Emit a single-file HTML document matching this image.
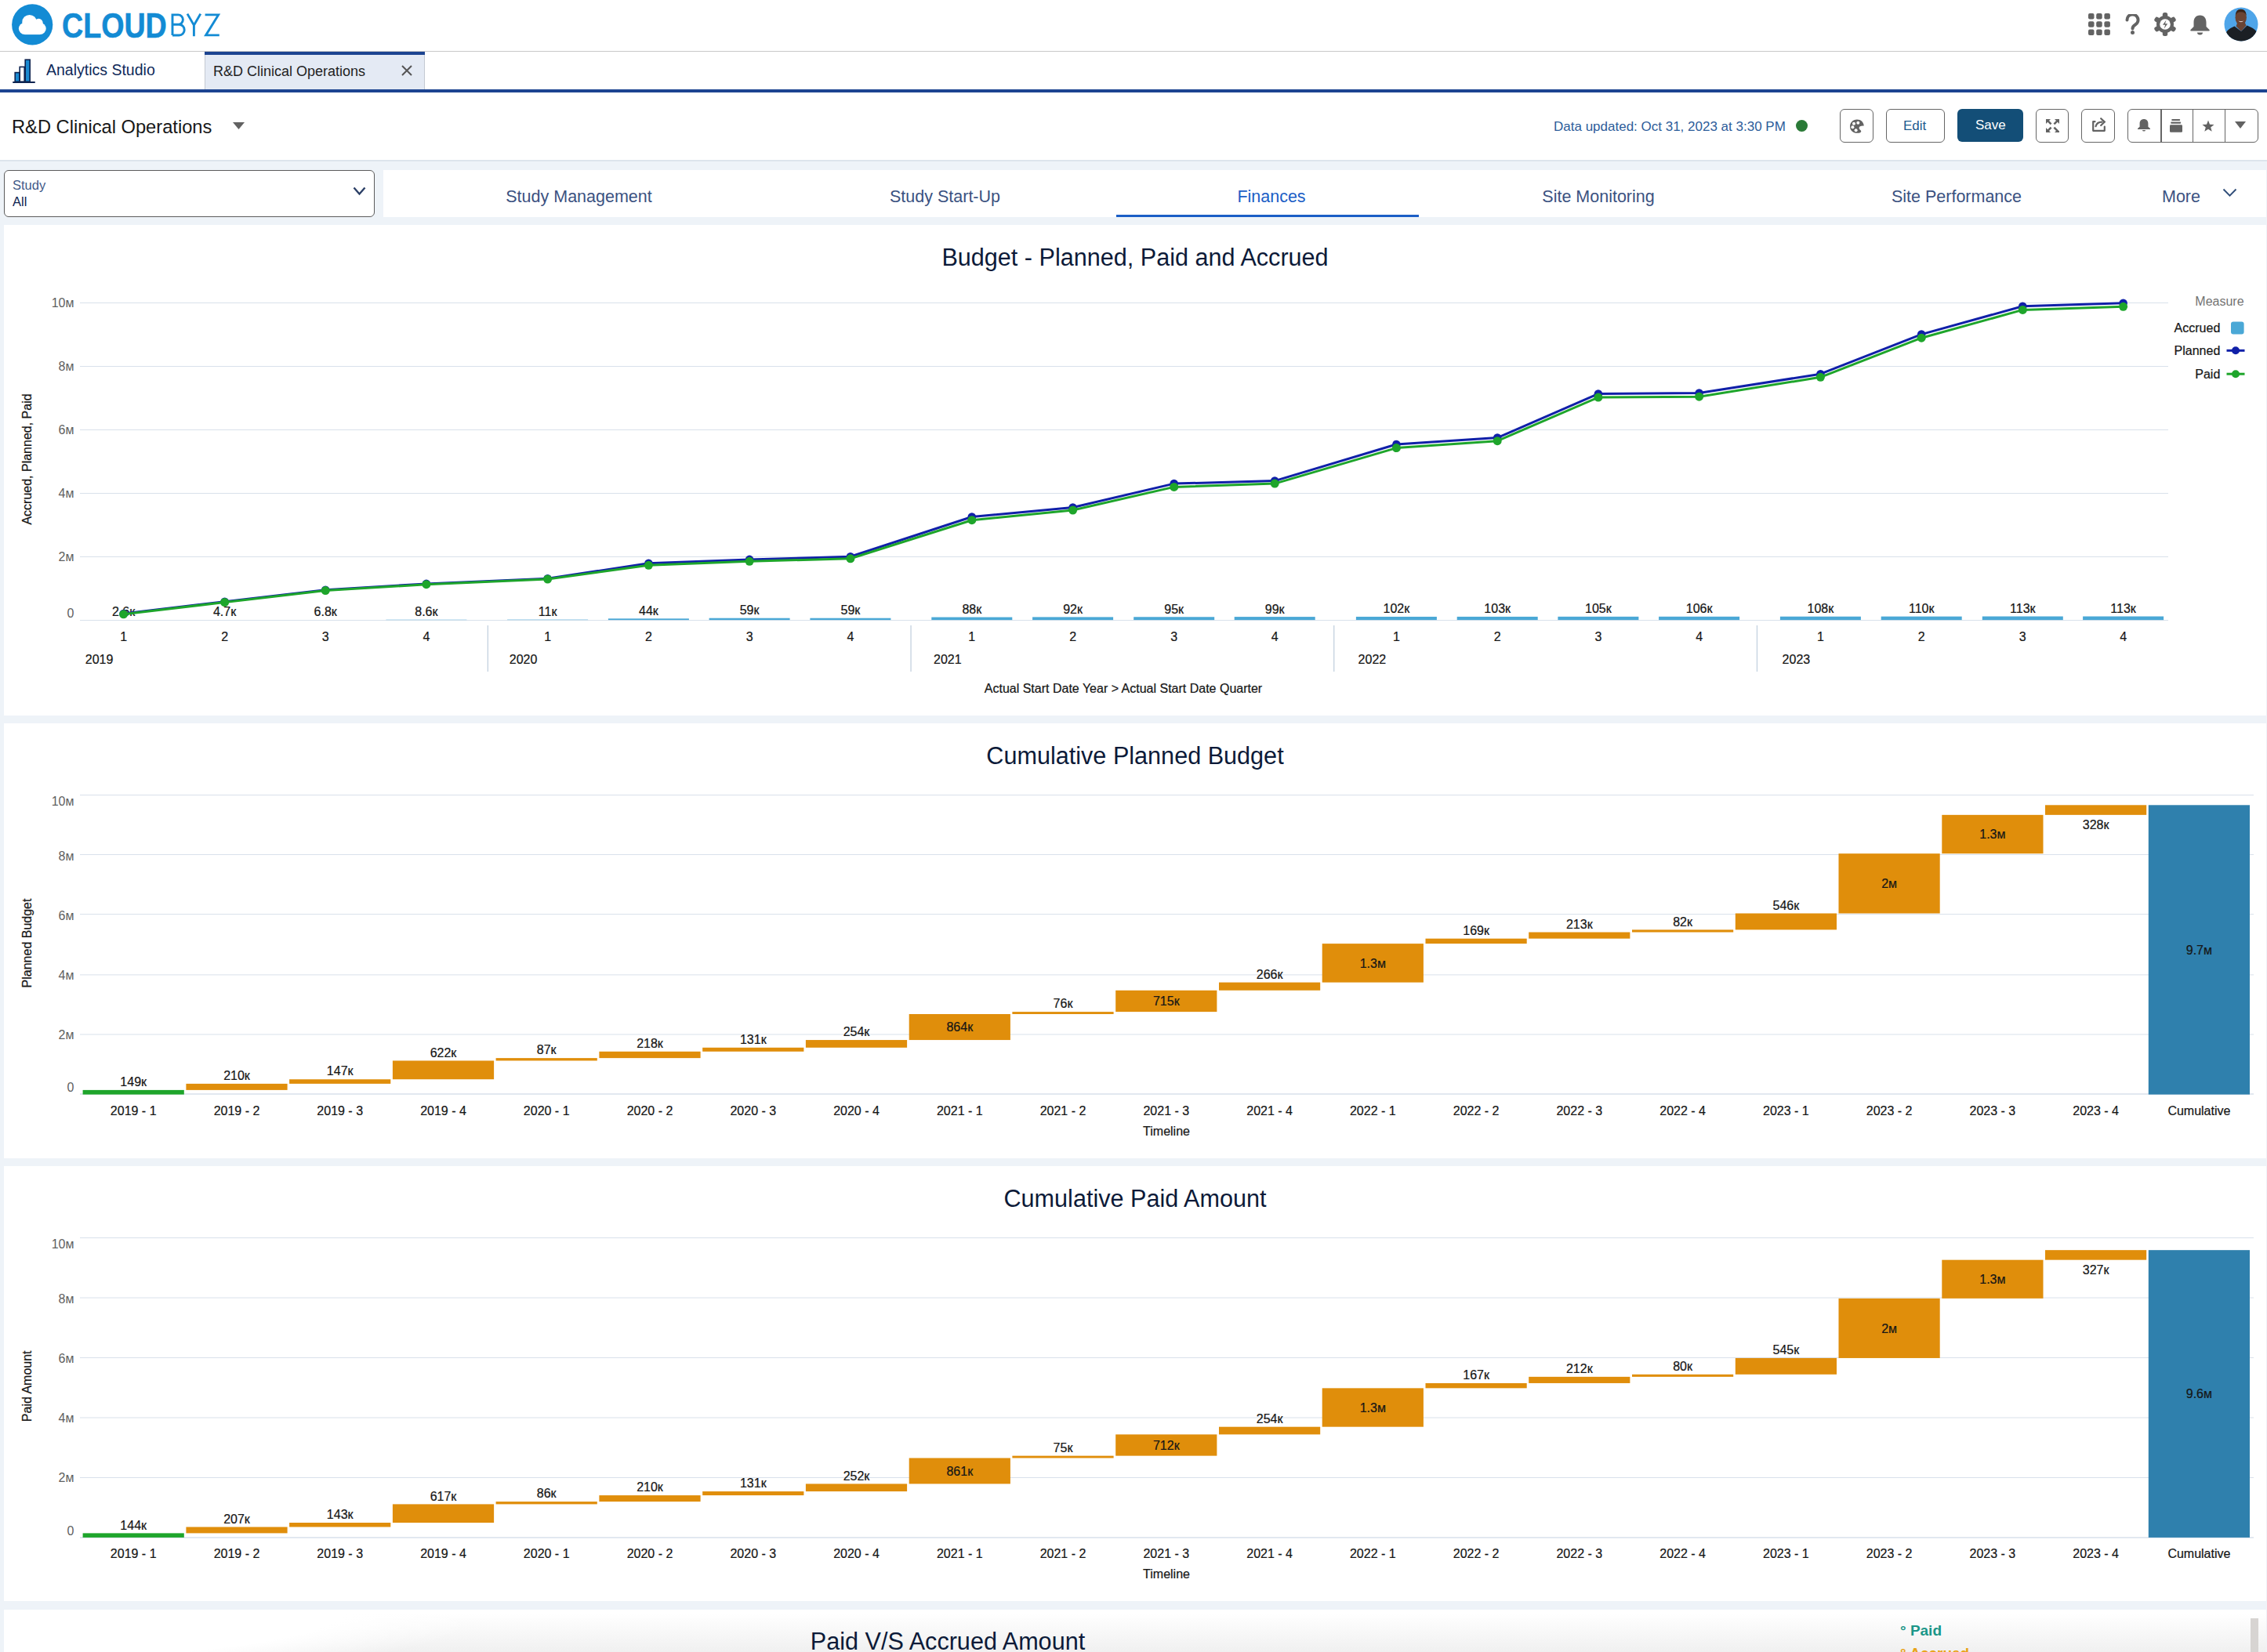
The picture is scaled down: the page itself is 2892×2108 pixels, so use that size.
<!DOCTYPE html><html><head><meta charset="utf-8"><title>R&amp;D Clinical Operations</title><style>
*{margin:0;padding:0;box-sizing:border-box}
html,body{width:2892px;height:2108px;overflow:hidden;background:#eef3f8;font-family:"Liberation Sans",sans-serif}
.a{position:absolute}
.t{position:absolute;white-space:nowrap;line-height:1}
</style></head><body>
<div class="a" style="left:0;top:0;width:2892px;height:65px;background:#fff"></div>
<div class="a" style="left:0;top:65px;width:2892px;height:1px;background:#c9c9c9"></div>
<svg class="a" style="left:15px;top:5px" width="53" height="53" viewBox="0 0 53 53">
<circle cx="26.2" cy="26.4" r="26.1" fill="#138bd4"/>
<g fill="#fff"><circle cx="22.6" cy="23.2" r="9.3"/><circle cx="34.3" cy="24.2" r="5.4"/><circle cx="16.5" cy="31.5" r="7.6"/><circle cx="36.1" cy="31.5" r="7.6"/><rect x="16.5" y="24" width="19.6" height="15.1"/></g>
</svg>
<div class="t" style="left:79px;top:11px;font-size:44px;font-weight:bold;color:#138bd4;-webkit-text-stroke:0.6px #138bd4;transform:scaleX(0.855);transform-origin:left">CLOUD</div>
<svg class="a" style="left:0;top:0" width="300" height="60" viewBox="0 0 300 60"><g fill="none" stroke="#138bd4" stroke-width="2.9" stroke-linejoin="miter">
<path d="M220 45 V18.9 H227.3 A6.1 6.2 0 0 1 227.3 31.3 H220 M227.3 31.3 H228.6 A6.6 6.85 0 0 1 228.6 45 H220"/>
<path d="M239 17.6 L247.4 32.2 L255.8 17.6 M247.4 32.2 V46.3"/>
<path d="M261.6 18.9 H278.6 L262.6 44.9 H279.8"/>
</g></svg>
<svg class="a" style="left:2664px;top:17px" width="28" height="28" viewBox="0 0 28 28" fill="#636363">
<rect x="0" y="0" width="7.5" height="7.5" rx="2"/><rect x="10.2" y="0" width="7.5" height="7.5" rx="2"/><rect x="20.4" y="0" width="7.5" height="7.5" rx="2"/>
<rect x="0" y="10.2" width="7.5" height="7.5" rx="2"/><rect x="10.2" y="10.2" width="7.5" height="7.5" rx="2"/><rect x="20.4" y="10.2" width="7.5" height="7.5" rx="2"/>
<rect x="0" y="20.4" width="7.5" height="7.5" rx="2"/><rect x="10.2" y="20.4" width="7.5" height="7.5" rx="2"/><rect x="20.4" y="20.4" width="7.5" height="7.5" rx="2"/>
</svg>
<svg class="a" style="left:2711px;top:18px" width="19" height="27" viewBox="0 0 19 27">
<path d="M2.5 7.5 a7 7 0 1 1 10.5 6 q-3.5 2 -3.5 5" fill="none" stroke="#636363" stroke-width="4" stroke-linecap="round"/>
<circle cx="9.5" cy="23.5" r="2.5" fill="#636363"/>
</svg>
<svg class="a" style="left:2747px;top:15px" width="30" height="32" viewBox="0 0 30 32">
<g fill="#636363"><circle cx="15" cy="16" r="11"/>
<g transform="translate(15 16)">
<rect x="-3.2" y="-15" width="6.4" height="7" rx="2.5"/>
<rect x="-3.2" y="-15" width="6.4" height="7" rx="2.5" transform="rotate(60)"/>
<rect x="-3.2" y="-15" width="6.4" height="7" rx="2.5" transform="rotate(120)"/>
<rect x="-3.2" y="-15" width="6.4" height="7" rx="2.5" transform="rotate(180)"/>
<rect x="-3.2" y="-15" width="6.4" height="7" rx="2.5" transform="rotate(240)"/>
<rect x="-3.2" y="-15" width="6.4" height="7" rx="2.5" transform="rotate(300)"/>
</g></g>
<circle cx="15" cy="16" r="6.8" fill="#fff"/>
<path d="M16.5 10.5 l-4.5 6.2 h3.2 l-1.6 5 l4.6 -6.4 h-3.2 z" fill="#636363"/>
</svg>
<svg class="a" style="left:2793px;top:18px" width="27" height="27" viewBox="0 0 27 27">
<path d="M13.5 1.5 c-5.5 0 -8 4.2 -8 9 v5.5 l-4 4 q-0.8 1.2 0.6 1.6 h22.8 q1.4 -0.4 0.6 -1.6 l-4 -4 v-5.5 c0 -4.8 -2.5 -9 -8 -9 z" fill="#636363"/>
<path d="M10 23.5 h7 a3.5 3 0 0 1 -7 0 z" fill="#636363"/>
</svg>
<svg class="a" style="left:2837px;top:9px" width="44" height="44" viewBox="0 0 44 44">
<defs><clipPath id="avc"><circle cx="22" cy="22" r="21.5"/></clipPath></defs>
<g clip-path="url(#avc)">
<rect width="44" height="44" fill="#4fa5e9"/>
<path d="M15.5 24.5 L22 31 L28.5 23.5 L26 18 L18 18 Z" fill="#6a4434"/>
<path d="M-2 46 L2 34 Q4 28.5 13.5 24.5 L22 31 L29.5 23.5 Q38 26.5 42 31.5 L46 46 Z" fill="#1b1f24"/>
<ellipse cx="21.7" cy="13.2" rx="7.2" ry="10.4" fill="#6a4434"/>
<path d="M14.6 11 Q15 2.8 21.7 2.8 Q28.4 2.8 28.8 11 Q27.5 6.2 21.7 6.2 Q16 6.2 14.6 11 Z" fill="#3a2419"/>
<path d="M18.3 17.5 Q21.8 21 25.3 17.5 Q21.8 18.8 18.3 17.5 Z" fill="#f2e6e3"/>
</g></svg>
<div class="a" style="left:0;top:66px;width:2892px;height:48px;background:#fff"></div>
<div class="a" style="left:0;top:114px;width:2892px;height:4px;background:#1c4491"></div>
<svg class="a" style="left:15px;top:75px" width="31" height="31" viewBox="0 0 31 31">
<rect x="1" y="29" width="29" height="2" rx="1" fill="#0d2350"/>
<rect x="4.2" y="17.6" width="6" height="11.6" fill="#1a8ad0" stroke="#0d2350" stroke-width="1.6"/>
<rect x="10.2" y="10.4" width="6" height="18.8" fill="#fff" stroke="#0d2350" stroke-width="1.6"/>
<rect x="17.2" y="1.2" width="6" height="28" fill="#1a8ad0" stroke="#0d2350" stroke-width="1.6"/>
</svg>
<div class="t" style="left:59px;top:80px;font-size:19.5px;color:#0f2a5a">Analytics Studio</div>
<div class="a" style="left:261px;top:66px;width:281px;height:48px;background:#e4eaf4;border-left:1px solid #c4c9d2;border-right:1px solid #c4c9d2"></div>
<div class="a" style="left:261px;top:66px;width:281px;height:4px;background:#1c4491"></div>
<div class="t" style="left:272px;top:82px;font-size:18px;color:#1f1f1f">R&amp;D Clinical Operations</div>
<svg class="a" style="left:512px;top:83px" width="14" height="14" viewBox="0 0 14 14"><path d="M1 1 L13 13 M13 1 L1 13" stroke="#555" stroke-width="2"/></svg>
<div class="a" style="left:0;top:118px;width:2892px;height:86px;background:#fff"></div>
<div class="a" style="left:0;top:204px;width:2892px;height:2px;background:#dde4ec"></div>
<div class="t" style="left:15px;top:151px;font-size:23.7px;color:#181818">R&amp;D Clinical Operations</div>
<svg class="a" style="left:297px;top:156px" width="15" height="9" viewBox="0 0 15 9"><path d="M0 0 H15 L7.5 9 Z" fill="#626262"/></svg>
<div class="t" style="left:1982px;top:153px;font-size:17px;color:#2d5d9a">Data updated: Oct 31, 2023 at 3:30 PM</div>
<div class="a" style="left:2291px;top:153px;width:15px;height:15px;border-radius:50%;background:#2a7a37"></div>
<div class="a" style="left:2347px;top:139px;width:43px;height:43px;border:1.3px solid #666;border-radius:6px;background:#fff;"><svg class="a" style="left:11px;top:11px" width="20" height="20" viewBox="0 0 20 20"><path d="M10 1.5 C4.5 1.5 1 5.5 1 10.5 C1 15.5 5 18.8 10 18.8 C13.5 18.8 15.6 17.8 15.2 16.2 C14.8 14.6 12.6 14.4 12.6 12.2 C12.6 10.4 14.5 9.6 17.5 9.6 L18.8 9.6 C18.5 5 15 1.5 10 1.5 Z" fill="#626262"/><circle cx="6" cy="6.8" r="2" fill="#fff"/><circle cx="11.3" cy="5.8" r="2" fill="#fff"/><circle cx="4.4" cy="11.2" r="2" fill="#fff"/><circle cx="8.6" cy="15.2" r="2" fill="#fff"/></svg></div>
<div class="a" style="left:2406px;top:139px;width:75px;height:43px;border:1.3px solid #666;border-radius:6px;background:#fff;"><div class="t" style="left:21px;top:12px;font-size:17px;color:#1d5a8e">Edit</div></div>
<div class="a" style="left:2497px;top:139px;width:84px;height:42px;border-radius:6px;background:#134e77"></div>
<div class="t" style="left:2520px;top:151px;font-size:17px;color:#fff">Save</div>
<div class="a" style="left:2597px;top:139px;width:42px;height:43px;border:1.3px solid #666;border-radius:6px;background:#fff;"><svg class="a" style="left:11px;top:11px" width="19" height="19" viewBox="0 0 19 19" fill="#626262"><path d="M1 1 h6 l-2 2 l3.5 3.5 l-1.8 1.8 l-3.5 -3.5 l-2.2 2.2 z"/><path d="M18 1 h-6 l2 2 l-3.5 3.5 l1.8 1.8 l3.5 -3.5 l2.2 2.2 z"/><path d="M1 18 h6 l-2 -2 l3.5 -3.5 l-1.8 -1.8 l-3.5 3.5 l-2.2 -2.2 z"/><path d="M18 18 h-6 l2 -2 l-3.5 -3.5 l1.8 -1.8 l3.5 3.5 l2.2 2.2 z"/></svg></div>
<div class="a" style="left:2655px;top:139px;width:43px;height:43px;border:1.3px solid #666;border-radius:6px;background:#fff;"><svg class="a" style="left:12px;top:10px" width="19" height="19" viewBox="0 0 19 19"><path d="M4.5 5.2 H2.2 V16.8 H16.8 V11.5" fill="none" stroke="#626262" stroke-width="2.2" stroke-linejoin="round" stroke-linecap="round"/><path d="M5.5 11.2 C6.5 7.5 9.5 5.6 13.5 5.6" fill="none" stroke="#626262" stroke-width="2.2" stroke-linecap="round"/><path d="M12.2 1.2 L16.8 5.6 L12.2 10" fill="none" stroke="#626262" stroke-width="2.2" stroke-linecap="round"/></svg></div>
<div class="a" style="left:2714px;top:139px;width:167px;height:43px;border:1.3px solid #666;border-radius:6px;background:#fff"></div>
<div class="a" style="left:2756px;top:139px;width:2px;height:43px;background:#666"></div>
<div class="a" style="left:2797px;top:139px;width:1.3px;height:43px;background:#666"></div>
<div class="a" style="left:2838px;top:139px;width:1.3px;height:43px;background:#666"></div>
<svg class="a" style="left:2726px;top:151px" width="18" height="18" viewBox="0 0 18 18" fill="#626262"><path d="M9 1 c-3.2 0 -5.4 2.2 -5.4 5.5 v4.2 l-2.6 2.4 v0.9 h16 v-0.9 l-2.6 -2.4 v-4.2 c0 -3.3 -2.2 -5.5 -5.4 -5.5z"/><path d="M7 15 h4 a2 1.6 0 0 1 -4 0z"/></svg>
<svg class="a" style="left:2767px;top:151px" width="18" height="18" viewBox="0 0 18 18" fill="#626262"><rect x="3.2" y="1" width="11" height="2" rx="1"/><rect x="2.2" y="4.5" width="13" height="2.2" rx="1"/><rect x="1" y="8.2" width="16" height="9.5" rx="1.3"/></svg>
<svg class="a" style="left:2809px;top:153px" width="16" height="16" viewBox="0 0 16 16"><path d="M8 0.5 L10 5.7 L15.5 5.9 L11.2 9.4 L12.7 14.8 L8 11.7 L3.3 14.8 L4.8 9.4 L0.5 5.9 L6 5.7 Z" fill="#626262"/></svg>
<svg class="a" style="left:2851px;top:155px" width="15" height="10" viewBox="0 0 15 10"><path d="M0 0 H14 L7 9 Z" fill="#626262"/></svg>
<div class="a" style="left:5px;top:217px;width:473px;height:60px;background:#fff;border:1.3px solid #5c5c5c;border-radius:6px"></div>
<div class="t" style="left:16px;top:228px;font-size:16.5px;color:#3f5a88">Study</div>
<div class="t" style="left:16px;top:249px;font-size:16.5px;color:#0d2350">All</div>
<svg class="a" style="left:450px;top:238px" width="17" height="12" viewBox="0 0 17 12"><path d="M1.5 1.5 L8.5 9.5 L15.5 1.5" fill="none" stroke="#2b3f66" stroke-width="2.4"/></svg>
<div class="a" style="left:489px;top:217px;width:2402px;height:60px;background:#fff"></div>
<div class="t" style="left:338.5px;width:800px;text-align:center;top:241px;font-size:21.5px;color:#3b5281">Study Management</div>
<div class="t" style="left:805.5px;width:800px;text-align:center;top:241px;font-size:21.5px;color:#3b5281">Study Start-Up</div>
<div class="t" style="left:1222px;width:800px;text-align:center;top:241px;font-size:21.5px;color:#1b5ec6">Finances</div>
<div class="t" style="left:1639px;width:800px;text-align:center;top:241px;font-size:21.5px;color:#3b5281">Site Monitoring</div>
<div class="t" style="left:2096px;width:800px;text-align:center;top:241px;font-size:21.5px;color:#3b5281">Site Performance</div>
<div class="a" style="left:1424px;top:274px;width:386px;height:3px;background:#1b5ec6"></div>
<div class="t" style="left:2758px;top:241px;font-size:21.5px;color:#3b5281">More</div>
<svg class="a" style="left:2835px;top:240px" width="19" height="12" viewBox="0 0 19 12"><path d="M1.5 1.5 L9.5 9.7 L17.5 1.5" fill="none" stroke="#2f4d78" stroke-width="1.9"/></svg>
<div class="a" style="left:5px;top:287px;width:2886px;height:626px;background:#fff"></div>
<div class="a" style="left:5px;top:923px;width:2886px;height:555px;background:#fff"></div>
<div class="a" style="left:5px;top:1488px;width:2886px;height:555px;background:#fff"></div>
<div class="a" style="left:5px;top:2054px;width:2886px;height:54px;background:radial-gradient(ellipse 620px 90px at 0px 0px,#fff 0%,#fff 70%,rgba(255,255,255,0) 100%),linear-gradient(#fff 10%,#f0f0f0)"></div>
<svg class="a" style="left:0;top:0" width="2892" height="2108" viewBox="0 0 2892 2108" font-family="Liberation Sans, sans-serif"><style>text{stroke-width:0.22px}</style>
<text x="1448" y="339" text-anchor="middle" font-size="30.6" fill="#0c1a38">Budget - Planned, Paid and Accrued</text>
<rect x="102" y="386.00" width="2664" height="1" fill="#d9e1eb"/>
<rect x="102" y="467.00" width="2664" height="1" fill="#d9e1eb"/>
<rect x="102" y="548.00" width="2664" height="1" fill="#d9e1eb"/>
<rect x="102" y="629.00" width="2664" height="1" fill="#d9e1eb"/>
<rect x="102" y="710.00" width="2664" height="1" fill="#d9e1eb"/>
<rect x="102" y="791.00" width="2664" height="1" fill="#d9e1eb"/>
<text x="94.5" y="391.8" text-anchor="end" font-size="16" fill="#5f5f5f">10м</text>
<text x="94.5" y="472.8" text-anchor="end" font-size="16" fill="#5f5f5f">8м</text>
<text x="94.5" y="553.8" text-anchor="end" font-size="16" fill="#5f5f5f">6м</text>
<text x="94.5" y="634.8" text-anchor="end" font-size="16" fill="#5f5f5f">4м</text>
<text x="94.5" y="715.8" text-anchor="end" font-size="16" fill="#5f5f5f">2м</text>
<text x="94.5" y="788.0" text-anchor="end" font-size="16" fill="#5f5f5f">0</text>
<text transform="translate(39.5 586) rotate(-90)" text-anchor="middle" font-size="16" fill="#161616" stroke="#161616">Accrued, Planned, Paid</text>
<rect x="492.4" y="790.75" width="103" height="0.35" fill="#4aa8d6"/>
<rect x="647.1" y="790.65" width="103" height="0.45" fill="#4aa8d6"/>
<rect x="775.9" y="789.32" width="103" height="1.78" fill="#4aa8d6"/>
<rect x="904.6" y="788.71" width="103" height="2.39" fill="#4aa8d6"/>
<rect x="1033.4" y="788.71" width="103" height="2.39" fill="#4aa8d6"/>
<rect x="1188.3" y="787.54" width="103" height="3.56" fill="#4aa8d6"/>
<rect x="1317.1" y="787.38" width="103" height="3.72" fill="#4aa8d6"/>
<rect x="1446.2" y="787.26" width="103" height="3.84" fill="#4aa8d6"/>
<rect x="1574.7" y="787.09" width="103" height="4.01" fill="#4aa8d6"/>
<rect x="1729.9" y="786.97" width="103" height="4.13" fill="#4aa8d6"/>
<rect x="1858.7" y="786.93" width="103" height="4.17" fill="#4aa8d6"/>
<rect x="1987.4" y="786.85" width="103" height="4.25" fill="#4aa8d6"/>
<rect x="2116.1" y="786.81" width="103" height="4.29" fill="#4aa8d6"/>
<rect x="2270.9" y="786.73" width="103" height="4.37" fill="#4aa8d6"/>
<rect x="2399.7" y="786.65" width="103" height="4.45" fill="#4aa8d6"/>
<rect x="2528.8" y="786.53" width="103" height="4.57" fill="#4aa8d6"/>
<rect x="2657.1" y="786.53" width="103" height="4.57" fill="#4aa8d6"/>
<text x="157.6" y="786.4" text-anchor="middle" font-size="16" fill="#161616" stroke="#161616">2.6к</text>
<text x="286.6" y="786.3" text-anchor="middle" font-size="16" fill="#161616" stroke="#161616">4.7к</text>
<text x="415.2" y="786.2" text-anchor="middle" font-size="16" fill="#161616" stroke="#161616">6.8к</text>
<text x="543.9" y="786.2" text-anchor="middle" font-size="16" fill="#161616" stroke="#161616">8.6к</text>
<text x="698.6" y="786.1" text-anchor="middle" font-size="16" fill="#161616" stroke="#161616">11к</text>
<text x="827.4" y="784.7" text-anchor="middle" font-size="16" fill="#161616" stroke="#161616">44к</text>
<text x="956.1" y="784.1" text-anchor="middle" font-size="16" fill="#161616" stroke="#161616">59к</text>
<text x="1084.9" y="784.1" text-anchor="middle" font-size="16" fill="#161616" stroke="#161616">59к</text>
<text x="1239.8" y="782.9" text-anchor="middle" font-size="16" fill="#161616" stroke="#161616">88к</text>
<text x="1368.6" y="782.8" text-anchor="middle" font-size="16" fill="#161616" stroke="#161616">92к</text>
<text x="1497.7" y="782.7" text-anchor="middle" font-size="16" fill="#161616" stroke="#161616">95к</text>
<text x="1626.2" y="782.5" text-anchor="middle" font-size="16" fill="#161616" stroke="#161616">99к</text>
<text x="1781.4" y="782.4" text-anchor="middle" font-size="16" fill="#161616" stroke="#161616">102к</text>
<text x="1910.2" y="782.3" text-anchor="middle" font-size="16" fill="#161616" stroke="#161616">103к</text>
<text x="2038.9" y="782.3" text-anchor="middle" font-size="16" fill="#161616" stroke="#161616">105к</text>
<text x="2167.6" y="782.2" text-anchor="middle" font-size="16" fill="#161616" stroke="#161616">106к</text>
<text x="2322.4" y="782.1" text-anchor="middle" font-size="16" fill="#161616" stroke="#161616">108к</text>
<text x="2451.2" y="782.0" text-anchor="middle" font-size="16" fill="#161616" stroke="#161616">110к</text>
<text x="2580.3" y="781.9" text-anchor="middle" font-size="16" fill="#161616" stroke="#161616">113к</text>
<text x="2708.6" y="781.9" text-anchor="middle" font-size="16" fill="#161616" stroke="#161616">113к</text>
<text x="157.6" y="818" text-anchor="middle" font-size="16" fill="#161616" stroke="#161616">1</text>
<text x="286.6" y="818" text-anchor="middle" font-size="16" fill="#161616" stroke="#161616">2</text>
<text x="415.2" y="818" text-anchor="middle" font-size="16" fill="#161616" stroke="#161616">3</text>
<text x="543.9" y="818" text-anchor="middle" font-size="16" fill="#161616" stroke="#161616">4</text>
<text x="698.6" y="818" text-anchor="middle" font-size="16" fill="#161616" stroke="#161616">1</text>
<text x="827.4" y="818" text-anchor="middle" font-size="16" fill="#161616" stroke="#161616">2</text>
<text x="956.1" y="818" text-anchor="middle" font-size="16" fill="#161616" stroke="#161616">3</text>
<text x="1084.9" y="818" text-anchor="middle" font-size="16" fill="#161616" stroke="#161616">4</text>
<text x="1239.8" y="818" text-anchor="middle" font-size="16" fill="#161616" stroke="#161616">1</text>
<text x="1368.6" y="818" text-anchor="middle" font-size="16" fill="#161616" stroke="#161616">2</text>
<text x="1497.7" y="818" text-anchor="middle" font-size="16" fill="#161616" stroke="#161616">3</text>
<text x="1626.2" y="818" text-anchor="middle" font-size="16" fill="#161616" stroke="#161616">4</text>
<text x="1781.4" y="818" text-anchor="middle" font-size="16" fill="#161616" stroke="#161616">1</text>
<text x="1910.2" y="818" text-anchor="middle" font-size="16" fill="#161616" stroke="#161616">2</text>
<text x="2038.9" y="818" text-anchor="middle" font-size="16" fill="#161616" stroke="#161616">3</text>
<text x="2167.6" y="818" text-anchor="middle" font-size="16" fill="#161616" stroke="#161616">4</text>
<text x="2322.4" y="818" text-anchor="middle" font-size="16" fill="#161616" stroke="#161616">1</text>
<text x="2451.2" y="818" text-anchor="middle" font-size="16" fill="#161616" stroke="#161616">2</text>
<text x="2580.3" y="818" text-anchor="middle" font-size="16" fill="#161616" stroke="#161616">3</text>
<text x="2708.6" y="818" text-anchor="middle" font-size="16" fill="#161616" stroke="#161616">4</text>
<text x="108.8" y="846.8" font-size="16" fill="#161616" stroke="#161616">2019</text>
<text x="649.8" y="846.8" font-size="16" fill="#161616" stroke="#161616">2020</text>
<text x="1191.0" y="846.8" font-size="16" fill="#161616" stroke="#161616">2021</text>
<text x="1732.6" y="846.8" font-size="16" fill="#161616" stroke="#161616">2022</text>
<text x="2273.6" y="846.8" font-size="16" fill="#161616" stroke="#161616">2023</text>
<rect x="621.7" y="798" width="1.3" height="59" fill="#c3d1df"/>
<rect x="1161.4" y="798" width="1.3" height="59" fill="#c3d1df"/>
<rect x="1701.1" y="798" width="1.3" height="59" fill="#c3d1df"/>
<rect x="2240.8" y="798" width="1.3" height="59" fill="#c3d1df"/>
<text x="1433" y="884.1" text-anchor="middle" font-size="16" fill="#161616" stroke="#161616">Actual Start Date Year &gt; Actual Start Date Quarter</text>
<polyline points="157.6,783.0 286.6,767.7 415.2,752.8 543.9,744.9 698.6,738.2 827.4,718.8 956.1,713.9 1084.9,710.3 1239.8,659.5 1368.6,647.5 1497.7,617.1 1626.2,613.6 1781.4,567.0 1910.2,558.6 2038.9,502.5 2167.6,501.6 2322.4,477.2 2451.2,426.6 2580.3,390.8 2708.6,386.7" fill="none" stroke="#1020a8" stroke-width="3" stroke-linejoin="round"/>
<circle cx="157.6" cy="783.0" r="5.3" fill="#1020a8"/>
<circle cx="286.6" cy="767.7" r="5.3" fill="#1020a8"/>
<circle cx="415.2" cy="752.8" r="5.3" fill="#1020a8"/>
<circle cx="543.9" cy="744.9" r="5.3" fill="#1020a8"/>
<circle cx="698.6" cy="738.2" r="5.3" fill="#1020a8"/>
<circle cx="827.4" cy="718.8" r="5.3" fill="#1020a8"/>
<circle cx="956.1" cy="713.9" r="5.3" fill="#1020a8"/>
<circle cx="1084.9" cy="710.3" r="5.3" fill="#1020a8"/>
<circle cx="1239.8" cy="659.5" r="5.3" fill="#1020a8"/>
<circle cx="1368.6" cy="647.5" r="5.3" fill="#1020a8"/>
<circle cx="1497.7" cy="617.1" r="5.3" fill="#1020a8"/>
<circle cx="1626.2" cy="613.6" r="5.3" fill="#1020a8"/>
<circle cx="1781.4" cy="567.0" r="5.3" fill="#1020a8"/>
<circle cx="1910.2" cy="558.6" r="5.3" fill="#1020a8"/>
<circle cx="2038.9" cy="502.5" r="5.3" fill="#1020a8"/>
<circle cx="2167.6" cy="501.6" r="5.3" fill="#1020a8"/>
<circle cx="2322.4" cy="477.2" r="5.3" fill="#1020a8"/>
<circle cx="2451.2" cy="426.6" r="5.3" fill="#1020a8"/>
<circle cx="2580.3" cy="390.8" r="5.3" fill="#1020a8"/>
<circle cx="2708.6" cy="386.7" r="5.3" fill="#1020a8"/>
<polyline points="157.6,783.8 286.6,768.5 415.2,753.6 543.9,745.7 698.6,739.0 827.4,721.3 956.1,716.3 1084.9,712.8 1239.8,663.7 1368.6,651.0 1497.7,621.4 1626.2,617.1 1781.4,571.6 1910.2,562.7 2038.9,507.1 2167.6,506.2 2322.4,481.3 2451.2,431.2 2580.3,395.4 2708.6,391.3" fill="none" stroke="#1ea52b" stroke-width="3" stroke-linejoin="round"/>
<circle cx="157.6" cy="783.8" r="5.5" fill="#1ea52b"/>
<circle cx="286.6" cy="768.5" r="5.5" fill="#1ea52b"/>
<circle cx="415.2" cy="753.6" r="5.5" fill="#1ea52b"/>
<circle cx="543.9" cy="745.7" r="5.5" fill="#1ea52b"/>
<circle cx="698.6" cy="739.0" r="5.5" fill="#1ea52b"/>
<circle cx="827.4" cy="721.3" r="5.5" fill="#1ea52b"/>
<circle cx="956.1" cy="716.3" r="5.5" fill="#1ea52b"/>
<circle cx="1084.9" cy="712.8" r="5.5" fill="#1ea52b"/>
<circle cx="1239.8" cy="663.7" r="5.5" fill="#1ea52b"/>
<circle cx="1368.6" cy="651.0" r="5.5" fill="#1ea52b"/>
<circle cx="1497.7" cy="621.4" r="5.5" fill="#1ea52b"/>
<circle cx="1626.2" cy="617.1" r="5.5" fill="#1ea52b"/>
<circle cx="1781.4" cy="571.6" r="5.5" fill="#1ea52b"/>
<circle cx="1910.2" cy="562.7" r="5.5" fill="#1ea52b"/>
<circle cx="2038.9" cy="507.1" r="5.5" fill="#1ea52b"/>
<circle cx="2167.6" cy="506.2" r="5.5" fill="#1ea52b"/>
<circle cx="2322.4" cy="481.3" r="5.5" fill="#1ea52b"/>
<circle cx="2451.2" cy="431.2" r="5.5" fill="#1ea52b"/>
<circle cx="2580.3" cy="395.4" r="5.5" fill="#1ea52b"/>
<circle cx="2708.6" cy="391.3" r="5.5" fill="#1ea52b"/>
<text x="2862.6" y="390" text-anchor="end" font-size="16" fill="#737373">Measure</text>
<text x="2832.3" y="424" text-anchor="end" font-size="16" fill="#161616" stroke="#161616">Accrued</text>
<text x="2832.3" y="453" text-anchor="end" font-size="16" fill="#161616" stroke="#161616">Planned</text>
<text x="2832.3" y="483" text-anchor="end" font-size="16" fill="#161616" stroke="#161616">Paid</text>
<rect x="2846" y="410.6" width="16.6" height="16" rx="3" fill="#4aa8d6"/>
<rect x="2840.5" y="445.8" width="23" height="3" fill="#1020a8"/><circle cx="2852" cy="447.3" r="5" fill="#1020a8"/>
<rect x="2840.5" y="475.7" width="23" height="3" fill="#1ea52b"/><circle cx="2852" cy="477.2" r="5" fill="#1ea52b"/>
<text x="1448" y="974.5" text-anchor="middle" font-size="30.6" fill="#0c1a38">Cumulative Planned Budget</text>
<rect x="102" y="1014.00" width="2773" height="1" fill="#d9e1eb"/>
<text x="94.5" y="1027.5" text-anchor="end" font-size="16" fill="#5f5f5f">10м</text>
<rect x="102" y="1090.00" width="2773" height="1" fill="#d9e1eb"/>
<text x="94.5" y="1097.6" text-anchor="end" font-size="16" fill="#5f5f5f">8м</text>
<rect x="102" y="1166.10" width="2773" height="1" fill="#d9e1eb"/>
<text x="94.5" y="1173.7" text-anchor="end" font-size="16" fill="#5f5f5f">6м</text>
<rect x="102" y="1243.40" width="2773" height="1" fill="#d9e1eb"/>
<text x="94.5" y="1249.7" text-anchor="end" font-size="16" fill="#5f5f5f">4м</text>
<rect x="102" y="1319.50" width="2773" height="1" fill="#d9e1eb"/>
<text x="94.5" y="1325.5" text-anchor="end" font-size="16" fill="#5f5f5f">2м</text>
<rect x="102" y="1395.25" width="2773" height="1.5" fill="#d9e1eb"/>
<text x="94.5" y="1393.4" text-anchor="end" font-size="16" fill="#5f5f5f">0</text>
<text transform="translate(39.5 1203.5) rotate(-90)" text-anchor="middle" font-size="16" fill="#161616" stroke="#161616">Planned Budget</text>
<rect x="105.6" y="1390.90" width="129.2" height="5.70" fill="#1ea52b"/>
<text x="170.2" y="1386.1" text-anchor="middle" font-size="16" fill="#161616" stroke="#161616">149к</text>
<rect x="237.4" y="1382.87" width="129.2" height="8.03" fill="#e08e0b"/>
<text x="302.0" y="1378.1" text-anchor="middle" font-size="16" fill="#161616" stroke="#161616">210к</text>
<rect x="369.1" y="1377.25" width="129.2" height="5.62" fill="#e08e0b"/>
<text x="433.7" y="1372.4" text-anchor="middle" font-size="16" fill="#161616" stroke="#161616">147к</text>
<rect x="500.9" y="1353.45" width="129.2" height="23.79" fill="#e08e0b"/>
<text x="565.5" y="1348.7" text-anchor="middle" font-size="16" fill="#161616" stroke="#161616">622к</text>
<rect x="632.6" y="1350.13" width="129.2" height="3.33" fill="#e08e0b"/>
<text x="697.2" y="1345.3" text-anchor="middle" font-size="16" fill="#161616" stroke="#161616">87к</text>
<rect x="764.4" y="1341.79" width="129.2" height="8.34" fill="#e08e0b"/>
<text x="829.0" y="1337.0" text-anchor="middle" font-size="16" fill="#161616" stroke="#161616">218к</text>
<rect x="896.2" y="1336.78" width="129.2" height="5.01" fill="#e08e0b"/>
<text x="960.8" y="1332.0" text-anchor="middle" font-size="16" fill="#161616" stroke="#161616">131к</text>
<rect x="1027.9" y="1327.06" width="129.2" height="9.72" fill="#e08e0b"/>
<text x="1092.5" y="1322.3" text-anchor="middle" font-size="16" fill="#161616" stroke="#161616">254к</text>
<rect x="1159.7" y="1294.01" width="129.2" height="33.05" fill="#e08e0b"/>
<text x="1224.3" y="1316.1" text-anchor="middle" font-size="16" fill="#161616" stroke="#161616">864к</text>
<rect x="1291.4" y="1291.11" width="129.2" height="2.91" fill="#e08e0b"/>
<text x="1356.0" y="1286.3" text-anchor="middle" font-size="16" fill="#161616" stroke="#161616">76к</text>
<rect x="1423.2" y="1263.76" width="129.2" height="27.35" fill="#e08e0b"/>
<text x="1487.8" y="1283.0" text-anchor="middle" font-size="16" fill="#161616" stroke="#161616">715к</text>
<rect x="1555.0" y="1253.58" width="129.2" height="10.17" fill="#e08e0b"/>
<text x="1619.6" y="1248.8" text-anchor="middle" font-size="16" fill="#161616" stroke="#161616">266к</text>
<rect x="1686.7" y="1204.13" width="129.2" height="49.46" fill="#e08e0b"/>
<text x="1751.3" y="1234.5" text-anchor="middle" font-size="16" fill="#161616" stroke="#161616">1.3м</text>
<rect x="1818.5" y="1197.66" width="129.2" height="6.46" fill="#e08e0b"/>
<text x="1883.1" y="1192.9" text-anchor="middle" font-size="16" fill="#161616" stroke="#161616">169к</text>
<rect x="1950.2" y="1189.51" width="129.2" height="8.15" fill="#e08e0b"/>
<text x="2014.8" y="1184.7" text-anchor="middle" font-size="16" fill="#161616" stroke="#161616">213к</text>
<rect x="2082.0" y="1186.38" width="129.2" height="3.14" fill="#e08e0b"/>
<text x="2146.6" y="1181.6" text-anchor="middle" font-size="16" fill="#161616" stroke="#161616">82к</text>
<rect x="2213.8" y="1165.49" width="129.2" height="20.88" fill="#e08e0b"/>
<text x="2278.4" y="1160.7" text-anchor="middle" font-size="16" fill="#161616" stroke="#161616">546к</text>
<rect x="2345.5" y="1089.18" width="129.2" height="76.31" fill="#e08e0b"/>
<text x="2410.1" y="1132.9" text-anchor="middle" font-size="16" fill="#161616" stroke="#161616">2м</text>
<rect x="2477.3" y="1039.84" width="129.2" height="49.34" fill="#e08e0b"/>
<text x="2541.9" y="1070.1" text-anchor="middle" font-size="16" fill="#161616" stroke="#161616">1.3м</text>
<rect x="2609.0" y="1027.30" width="129.2" height="12.55" fill="#e08e0b"/>
<text x="2673.6" y="1058.0" text-anchor="middle" font-size="16" fill="#161616" stroke="#161616">328к</text>
<rect x="2740.8" y="1027.30" width="129.2" height="369.30" fill="#2f80ad"/>
<text x="2805.4" y="1217.5" text-anchor="middle" font-size="16" fill="#161616" stroke="#161616">9.7м</text>
<text x="170.2" y="1423.0" text-anchor="middle" font-size="16" fill="#161616" stroke="#161616">2019 - 1</text>
<text x="302.0" y="1423.0" text-anchor="middle" font-size="16" fill="#161616" stroke="#161616">2019 - 2</text>
<text x="433.7" y="1423.0" text-anchor="middle" font-size="16" fill="#161616" stroke="#161616">2019 - 3</text>
<text x="565.5" y="1423.0" text-anchor="middle" font-size="16" fill="#161616" stroke="#161616">2019 - 4</text>
<text x="697.2" y="1423.0" text-anchor="middle" font-size="16" fill="#161616" stroke="#161616">2020 - 1</text>
<text x="829.0" y="1423.0" text-anchor="middle" font-size="16" fill="#161616" stroke="#161616">2020 - 2</text>
<text x="960.8" y="1423.0" text-anchor="middle" font-size="16" fill="#161616" stroke="#161616">2020 - 3</text>
<text x="1092.5" y="1423.0" text-anchor="middle" font-size="16" fill="#161616" stroke="#161616">2020 - 4</text>
<text x="1224.3" y="1423.0" text-anchor="middle" font-size="16" fill="#161616" stroke="#161616">2021 - 1</text>
<text x="1356.0" y="1423.0" text-anchor="middle" font-size="16" fill="#161616" stroke="#161616">2021 - 2</text>
<text x="1487.8" y="1423.0" text-anchor="middle" font-size="16" fill="#161616" stroke="#161616">2021 - 3</text>
<text x="1619.6" y="1423.0" text-anchor="middle" font-size="16" fill="#161616" stroke="#161616">2021 - 4</text>
<text x="1751.3" y="1423.0" text-anchor="middle" font-size="16" fill="#161616" stroke="#161616">2022 - 1</text>
<text x="1883.1" y="1423.0" text-anchor="middle" font-size="16" fill="#161616" stroke="#161616">2022 - 2</text>
<text x="2014.8" y="1423.0" text-anchor="middle" font-size="16" fill="#161616" stroke="#161616">2022 - 3</text>
<text x="2146.6" y="1423.0" text-anchor="middle" font-size="16" fill="#161616" stroke="#161616">2022 - 4</text>
<text x="2278.4" y="1423.0" text-anchor="middle" font-size="16" fill="#161616" stroke="#161616">2023 - 1</text>
<text x="2410.1" y="1423.0" text-anchor="middle" font-size="16" fill="#161616" stroke="#161616">2023 - 2</text>
<text x="2541.9" y="1423.0" text-anchor="middle" font-size="16" fill="#161616" stroke="#161616">2023 - 3</text>
<text x="2673.6" y="1423.0" text-anchor="middle" font-size="16" fill="#161616" stroke="#161616">2023 - 4</text>
<text x="2805.4" y="1423.0" text-anchor="middle" font-size="16" fill="#161616" stroke="#161616">Cumulative</text>
<text x="1488" y="1448.8" text-anchor="middle" font-size="16" fill="#161616" stroke="#161616">Timeline</text>
<text x="1448" y="1539.8" text-anchor="middle" font-size="30.6" fill="#0c1a38">Cumulative Paid Amount</text>
<rect x="102" y="1579.00" width="2773" height="1" fill="#d9e1eb"/>
<text x="94.5" y="1592.8" text-anchor="end" font-size="16" fill="#5f5f5f">10м</text>
<rect x="102" y="1655.50" width="2773" height="1" fill="#d9e1eb"/>
<text x="94.5" y="1662.9" text-anchor="end" font-size="16" fill="#5f5f5f">8м</text>
<rect x="102" y="1732.00" width="2773" height="1" fill="#d9e1eb"/>
<text x="94.5" y="1739.0" text-anchor="end" font-size="16" fill="#5f5f5f">6м</text>
<rect x="102" y="1808.50" width="2773" height="1" fill="#d9e1eb"/>
<text x="94.5" y="1815.0" text-anchor="end" font-size="16" fill="#5f5f5f">4м</text>
<rect x="102" y="1885.00" width="2773" height="1" fill="#d9e1eb"/>
<text x="94.5" y="1890.8" text-anchor="end" font-size="16" fill="#5f5f5f">2м</text>
<rect x="102" y="1961.25" width="2773" height="1.5" fill="#d9e1eb"/>
<text x="94.5" y="1958.7" text-anchor="end" font-size="16" fill="#5f5f5f">0</text>
<text transform="translate(39.5 1768.8) rotate(-90)" text-anchor="middle" font-size="16" fill="#161616" stroke="#161616">Paid Amount</text>
<rect x="105.6" y="1956.39" width="129.2" height="5.51" fill="#1ea52b"/>
<text x="170.2" y="1951.6" text-anchor="middle" font-size="16" fill="#161616" stroke="#161616">144к</text>
<rect x="237.4" y="1948.47" width="129.2" height="7.92" fill="#e08e0b"/>
<text x="302.0" y="1943.7" text-anchor="middle" font-size="16" fill="#161616" stroke="#161616">207к</text>
<rect x="369.1" y="1943.00" width="129.2" height="5.47" fill="#e08e0b"/>
<text x="433.7" y="1938.2" text-anchor="middle" font-size="16" fill="#161616" stroke="#161616">143к</text>
<rect x="500.9" y="1919.40" width="129.2" height="23.60" fill="#e08e0b"/>
<text x="565.5" y="1914.6" text-anchor="middle" font-size="16" fill="#161616" stroke="#161616">617к</text>
<rect x="632.6" y="1916.11" width="129.2" height="3.29" fill="#e08e0b"/>
<text x="697.2" y="1911.3" text-anchor="middle" font-size="16" fill="#161616" stroke="#161616">86к</text>
<rect x="764.4" y="1908.08" width="129.2" height="8.03" fill="#e08e0b"/>
<text x="829.0" y="1903.3" text-anchor="middle" font-size="16" fill="#161616" stroke="#161616">210к</text>
<rect x="896.2" y="1903.07" width="129.2" height="5.01" fill="#e08e0b"/>
<text x="960.8" y="1898.3" text-anchor="middle" font-size="16" fill="#161616" stroke="#161616">131к</text>
<rect x="1027.9" y="1893.43" width="129.2" height="9.64" fill="#e08e0b"/>
<text x="1092.5" y="1888.6" text-anchor="middle" font-size="16" fill="#161616" stroke="#161616">252к</text>
<rect x="1159.7" y="1860.50" width="129.2" height="32.93" fill="#e08e0b"/>
<text x="1224.3" y="1882.6" text-anchor="middle" font-size="16" fill="#161616" stroke="#161616">861к</text>
<rect x="1291.4" y="1857.63" width="129.2" height="2.87" fill="#e08e0b"/>
<text x="1356.0" y="1852.8" text-anchor="middle" font-size="16" fill="#161616" stroke="#161616">75к</text>
<rect x="1423.2" y="1830.40" width="129.2" height="27.23" fill="#e08e0b"/>
<text x="1487.8" y="1849.6" text-anchor="middle" font-size="16" fill="#161616" stroke="#161616">712к</text>
<rect x="1555.0" y="1820.68" width="129.2" height="9.72" fill="#e08e0b"/>
<text x="1619.6" y="1815.9" text-anchor="middle" font-size="16" fill="#161616" stroke="#161616">254к</text>
<rect x="1686.7" y="1771.34" width="129.2" height="49.34" fill="#e08e0b"/>
<text x="1751.3" y="1801.6" text-anchor="middle" font-size="16" fill="#161616" stroke="#161616">1.3м</text>
<rect x="1818.5" y="1764.95" width="129.2" height="6.39" fill="#e08e0b"/>
<text x="1883.1" y="1760.2" text-anchor="middle" font-size="16" fill="#161616" stroke="#161616">167к</text>
<rect x="1950.2" y="1756.84" width="129.2" height="8.11" fill="#e08e0b"/>
<text x="2014.8" y="1752.0" text-anchor="middle" font-size="16" fill="#161616" stroke="#161616">212к</text>
<rect x="2082.0" y="1753.78" width="129.2" height="3.06" fill="#e08e0b"/>
<text x="2146.6" y="1749.0" text-anchor="middle" font-size="16" fill="#161616" stroke="#161616">80к</text>
<rect x="2213.8" y="1732.94" width="129.2" height="20.85" fill="#e08e0b"/>
<text x="2278.4" y="1728.1" text-anchor="middle" font-size="16" fill="#161616" stroke="#161616">545к</text>
<rect x="2345.5" y="1656.82" width="129.2" height="76.12" fill="#e08e0b"/>
<text x="2410.1" y="1700.5" text-anchor="middle" font-size="16" fill="#161616" stroke="#161616">2м</text>
<rect x="2477.3" y="1607.67" width="129.2" height="49.15" fill="#e08e0b"/>
<text x="2541.9" y="1637.8" text-anchor="middle" font-size="16" fill="#161616" stroke="#161616">1.3м</text>
<rect x="2609.0" y="1595.16" width="129.2" height="12.51" fill="#e08e0b"/>
<text x="2673.6" y="1625.9" text-anchor="middle" font-size="16" fill="#161616" stroke="#161616">327к</text>
<rect x="2740.8" y="1595.16" width="129.2" height="366.74" fill="#2f80ad"/>
<text x="2805.4" y="1784.1" text-anchor="middle" font-size="16" fill="#161616" stroke="#161616">9.6м</text>
<text x="170.2" y="1988.3" text-anchor="middle" font-size="16" fill="#161616" stroke="#161616">2019 - 1</text>
<text x="302.0" y="1988.3" text-anchor="middle" font-size="16" fill="#161616" stroke="#161616">2019 - 2</text>
<text x="433.7" y="1988.3" text-anchor="middle" font-size="16" fill="#161616" stroke="#161616">2019 - 3</text>
<text x="565.5" y="1988.3" text-anchor="middle" font-size="16" fill="#161616" stroke="#161616">2019 - 4</text>
<text x="697.2" y="1988.3" text-anchor="middle" font-size="16" fill="#161616" stroke="#161616">2020 - 1</text>
<text x="829.0" y="1988.3" text-anchor="middle" font-size="16" fill="#161616" stroke="#161616">2020 - 2</text>
<text x="960.8" y="1988.3" text-anchor="middle" font-size="16" fill="#161616" stroke="#161616">2020 - 3</text>
<text x="1092.5" y="1988.3" text-anchor="middle" font-size="16" fill="#161616" stroke="#161616">2020 - 4</text>
<text x="1224.3" y="1988.3" text-anchor="middle" font-size="16" fill="#161616" stroke="#161616">2021 - 1</text>
<text x="1356.0" y="1988.3" text-anchor="middle" font-size="16" fill="#161616" stroke="#161616">2021 - 2</text>
<text x="1487.8" y="1988.3" text-anchor="middle" font-size="16" fill="#161616" stroke="#161616">2021 - 3</text>
<text x="1619.6" y="1988.3" text-anchor="middle" font-size="16" fill="#161616" stroke="#161616">2021 - 4</text>
<text x="1751.3" y="1988.3" text-anchor="middle" font-size="16" fill="#161616" stroke="#161616">2022 - 1</text>
<text x="1883.1" y="1988.3" text-anchor="middle" font-size="16" fill="#161616" stroke="#161616">2022 - 2</text>
<text x="2014.8" y="1988.3" text-anchor="middle" font-size="16" fill="#161616" stroke="#161616">2022 - 3</text>
<text x="2146.6" y="1988.3" text-anchor="middle" font-size="16" fill="#161616" stroke="#161616">2022 - 4</text>
<text x="2278.4" y="1988.3" text-anchor="middle" font-size="16" fill="#161616" stroke="#161616">2023 - 1</text>
<text x="2410.1" y="1988.3" text-anchor="middle" font-size="16" fill="#161616" stroke="#161616">2023 - 2</text>
<text x="2541.9" y="1988.3" text-anchor="middle" font-size="16" fill="#161616" stroke="#161616">2023 - 3</text>
<text x="2673.6" y="1988.3" text-anchor="middle" font-size="16" fill="#161616" stroke="#161616">2023 - 4</text>
<text x="2805.4" y="1988.3" text-anchor="middle" font-size="16" fill="#161616" stroke="#161616">Cumulative</text>
<text x="1488" y="2014.1" text-anchor="middle" font-size="16" fill="#161616" stroke="#161616">Timeline</text>
<text x="1209" y="2105" text-anchor="middle" font-size="30.6" fill="#0c1a38">Paid V/S Accrued Amount</text>
<text x="2424" y="2087" font-size="19" font-weight="bold" fill="#1a9688">° Paid</text>
<text x="2424" y="2116" font-size="19" font-weight="bold" fill="#e8a317">° Accrued</text>
</svg>
<div class="a" style="left:2871px;top:2065px;width:10px;height:43px;background:#d7d4d2"></div>
</body></html>
